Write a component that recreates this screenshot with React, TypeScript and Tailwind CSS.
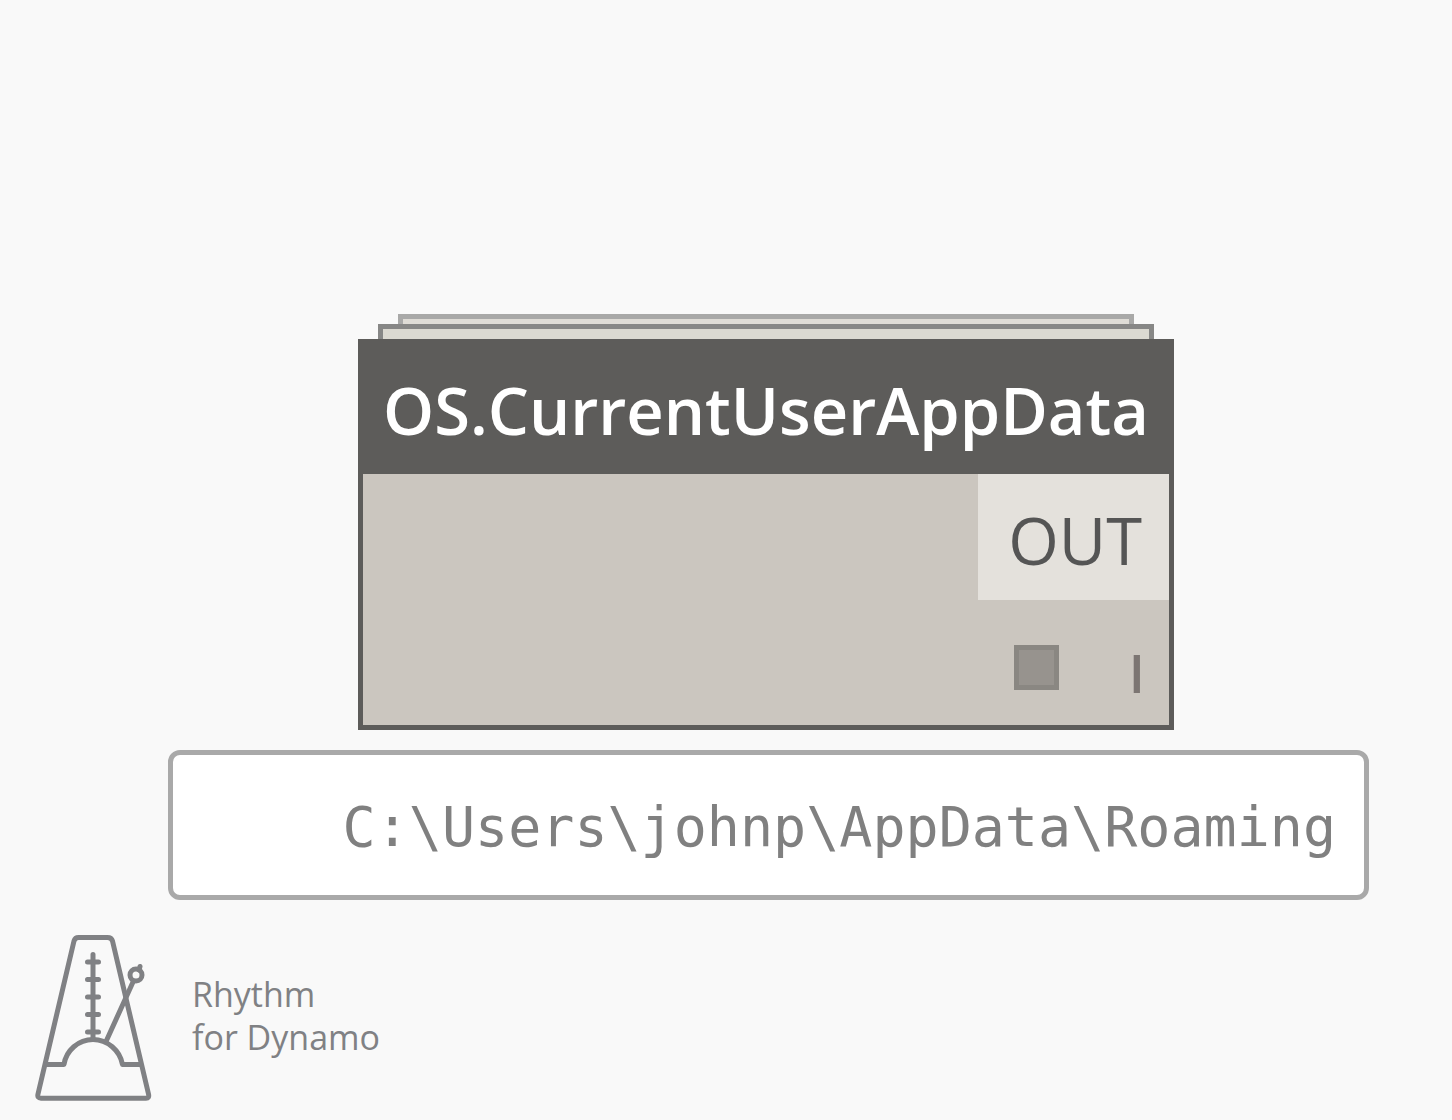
import React from "react";

function Metronome() {
  return (
    <svg
      className="h-[168px] w-[118px] shrink-0"
      viewBox="0 0 118 168"
      fill="none"
      stroke="#808184"
      strokeWidth="5"
      strokeLinecap="round"
      strokeLinejoin="round"
      aria-hidden="true"
    >
      <path d="M44.500 3.500H73.500Q77.500 3.500 78.500 7L114.500 160Q115.500 164.200 112 164.200H7Q3 164.200 4 160L40 7Q41 3.500 44.500 3.500Z" />
      <path d="M12.500 130.500H30C32 116.500 44.500 105.500 59 105.500S86 116.500 88.500 130.500H106" />
      <path d="M59 20.500V105M53.500 28H64.500M53.500 45.500H64.500M53.500 63H64.500M53.500 80.500H64.500M53.500 98H64.500" />
      <path d="M72.500 106.500L99 48M105 36L106 32.500" />
      <circle cx="102" cy="41" r="6" />
    </svg>
  );
}

function DynamoNode() {
  return (
    <section className="ml-[190px] mr-[195px] flex flex-col">
      <div className="mx-10 h-2.5 border-x-[5px] border-t-[5px] border-[#a9a9a8] bg-[#dfdcd6]" />
      <div className="mx-5 h-[15px] border-x-[5px] border-t-[5px] border-[#878786] bg-[#dbd9d1]" />
      <div className="border-[5px] border-[#5d5c5a] bg-[#cbc6bf]">
        <h1 className="flex h-[130px] items-center justify-center whitespace-nowrap bg-[#5d5c5a] pt-0.5 text-[65px] font-semibold leading-none text-white">
          OS.CurrentUserAppData
        </h1>
        <div className="flex h-[126px] justify-end">
          <div className="flex items-center bg-[#e4e1dc] pl-[30px] pr-[27px] pt-1.5 text-[65px] leading-none text-[#555555]">
            OUT
          </div>
        </div>
        <div className="flex h-[125px] items-center justify-end gap-[70px] pr-6">
          <button
            type="button"
            aria-label="Toggle preview"
            className="mt-2.5 size-[45px] border-[5px] border-[#8a8782] bg-[#97938e]"
          />
          <span className="pt-5 text-[53px] font-semibold leading-none text-[#7c7572]">I</span>
        </div>
      </div>
    </section>
  );
}

export default function App() {
  return (
    <div className="min-h-screen bg-[#f9f9f9] font-['Open_Sans',sans-serif]">
      <main className="flex flex-col pl-[168px] pr-[83px] pt-[314px]">
        <DynamoNode />
        <output className="mt-5 flex h-[150px] items-center justify-end whitespace-nowrap rounded-xl border-[5px] border-[#a9a9a9] bg-white pr-7 pt-1 font-['DejaVu_Sans_Mono',monospace] text-[55px] leading-none text-[#808080]">
          C:\Users\johnp\AppData\Roaming
        </output>
      </main>
      <footer className="flex items-center gap-10 pl-[34px] pt-[34px]">
        <Metronome />
        <p className="pb-1 text-[34px] leading-[43px] text-[#808184]">
          Rhythm
          <br />
          for Dynamo
        </p>
      </footer>
    </div>
  );
}
